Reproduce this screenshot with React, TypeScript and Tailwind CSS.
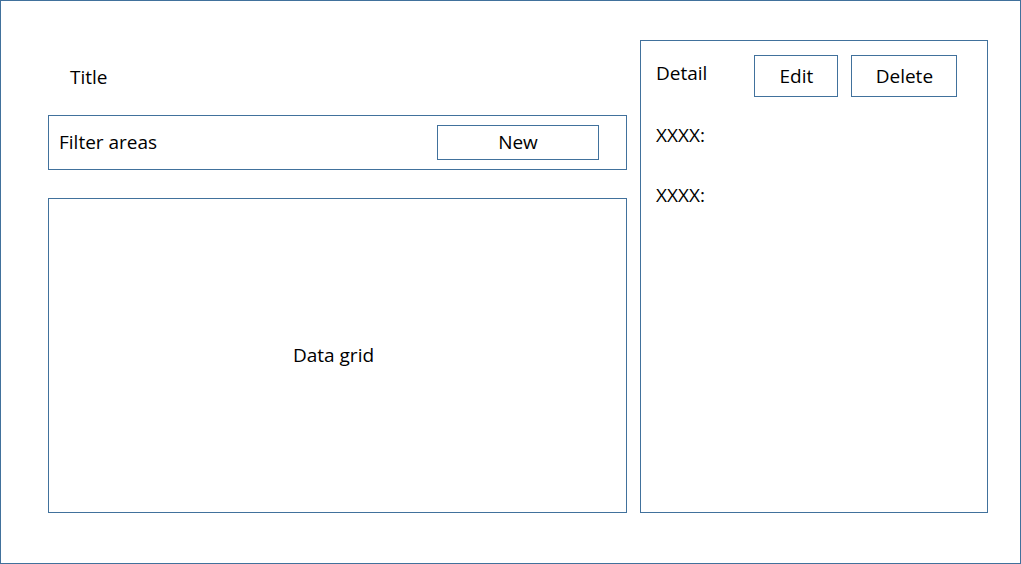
export default function App() {
  return (
    <div
      className="w-[1021px] h-[564px] border border-[#41719c] bg-white flex gap-[13px] pt-[39px] pl-[47px] pb-[50px] text-black text-[19px]"
      style={{ fontFamily: '"Open Sans", "Noto Sans", sans-serif' }}
    >
      <div className="w-[579px] flex flex-col">
        <div className="h-[75px] flex items-center pl-[22px] pb-[1px]">Title</div>
        <div className="h-[55px] border border-[#41719c] flex items-center justify-between pl-[10px] pr-[27px]">
          <span>Filter areas</span>
          <button className="w-[162px] h-[35px] border border-[#41719c] flex items-center justify-center">
            New
          </button>
        </div>
        <div className="mt-[28px] flex-1 border border-[#41719c] flex items-center justify-center pr-[8px]">
          Data grid
        </div>
      </div>
      <div className="w-[348px] border border-[#41719c] flex flex-col px-[15px] pt-[14px]">
        <div className="flex items-start">
          <span className="mt-[4px]">Detail</span>
          <button className="ml-[47px] w-[84px] h-[42px] border border-[#41719c] flex items-center justify-center">
            Edit
          </button>
          <button className="ml-[13px] w-[106px] h-[42px] border border-[#41719c] flex items-center justify-center">
            Delete
          </button>
        </div>
        <div className="mt-[24px]">XXXX:</div>
        <div className="mt-[31px]">XXXX:</div>
      </div>
    </div>
  );
}
